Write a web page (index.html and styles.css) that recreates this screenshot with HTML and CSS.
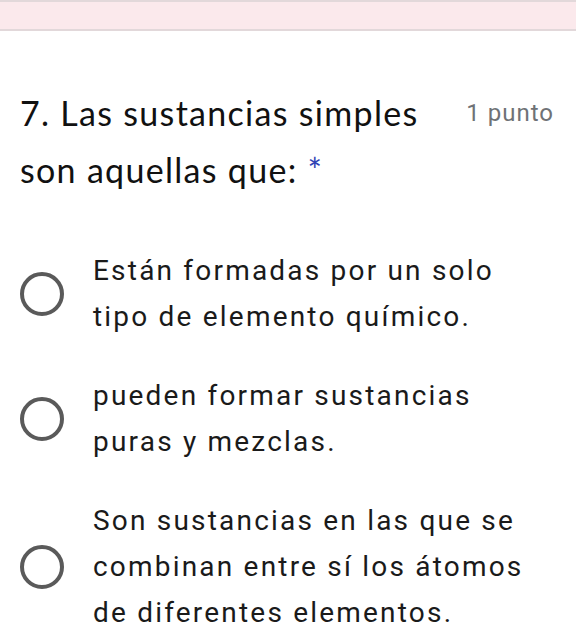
FILE: index.html
```html
<!DOCTYPE html>
<html lang="es">
<head>
<meta charset="utf-8">
<link rel="stylesheet" href="styles.css">
</head>
<body>
<div class="band"></div>
<div class="question">
  <div class="title">7. Las sustancias simples son aquellas que: <span class="req">*</span></div>
  <div class="points">1 punto</div>
</div>
<div class="options">
  <label class="option">
    <span class="radio"></span>
    <span class="text">Están formadas por un solo tipo de elemento químico.</span>
  </label>
  <label class="option">
    <span class="radio"></span>
    <span class="text">pueden formar sustancias puras y mezclas.</span>
  </label>
  <label class="option">
    <span class="radio"></span>
    <span class="text">Son sustancias en las que se combinan entre sí los átomos de diferentes elementos.</span>
  </label>
</div>
</body>
</html>
```

FILE: styles.css
```css
html, body {
  margin: 0;
  padding: 0;
  background: #ffffff;
}
body {
  width: 576px;
  height: 628px;
  overflow: hidden;
  font-family: Roboto, "Liberation Sans", sans-serif;
  color: #202124;
}
.band {
  height: 27px;
  background: #fbe9ec;
  border-top: 2px solid #e2d8da;
  border-bottom: 2px solid #e2d8da;
}
.question {
  display: flex;
  align-items: flex-start;
  padding: 0 22px 0 20px;
  margin-top: 53px;
}
.title {
  flex: 1;
  font-family: Lato, "Open Sans", sans-serif;
  font-size: 34px;
  letter-spacing: 1.3px;
  line-height: 57px;
  color: #111;
  padding-right: 30px;
}
.req {
  color: #2f43b4;
}
.points {
  font-size: 24px;
  letter-spacing: 1px;
  line-height: 57px;
  color: #6f7276;
  padding-top: 1px;
  white-space: nowrap;
}
.options {
  display: flex;
  flex-direction: column;
  gap: 33px;
  margin-top: 50px;
  padding: 0 30px 0 20px;
}
.option {
  display: flex;
  align-items: center;
}
.radio {
  flex: none;
  width: 36px;
  height: 36px;
  border: 4px solid #5a5a5a;
  border-radius: 50%;
  margin-right: 29px;
}
.text {
  font-size: 28px;
  line-height: 46px;
  color: #1a1a1a;
  letter-spacing: 2.2px;
}
```
